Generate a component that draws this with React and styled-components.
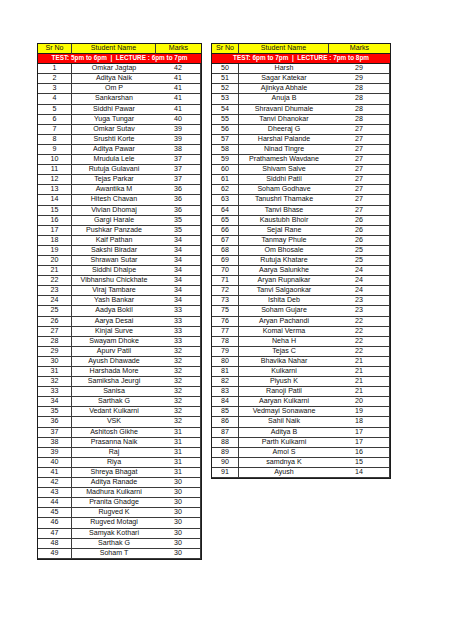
import React from 'react'
import styled, { createGlobalStyle } from 'styled-components'

const GlobalStyle = createGlobalStyle`
  html, body {
    margin: 0;
    padding: 0;
    background: #ffffff;
  }
  body {
    font-family: "Liberation Sans", Arial, sans-serif;
    color: #111111;
  }
`

const leftRows = [
  [1, 'Omkar Jagtap', 42], [2, 'Aditya Naik', 41], [3, 'Om P', 41], [4, 'Sankarshan', 41],
  [5, 'Siddhi Pawar', 41], [6, 'Yuga Tungar', 40], [7, 'Omkar Sutav', 39], [8, 'Srushti Korte', 39],
  [9, 'Aditya Pawar', 38], [10, 'Mrudula Lele', 37], [11, 'Rutuja Gulavani', 37], [12, 'Tejas Parkar', 37],
  [13, 'Awantika M', 36], [14, 'Hitesh Chavan', 36], [15, 'Vivian Dhomaj', 36], [16, 'Gargi Harale', 35],
  [17, 'Pushkar Panzade', 35], [18, 'Kaif Pathan', 34], [19, 'Sakshi Biradar', 34], [20, 'Shrawan Sutar', 34],
  [21, 'Siddhi Dhalpe', 34], [22, 'Vibhanshu Chickhate', 34], [23, 'Viraj Tambare', 34], [24, 'Yash Bankar', 34],
  [25, 'Aadya Bokil', 33], [26, 'Aarya Desai', 33], [27, 'Kinjal Surve', 33], [28, 'Swayam Dhoke', 33],
  [29, 'Apurv Patil', 32], [30, 'Ayush Dhawade', 32], [31, 'Harshada More', 32], [32, 'Samiksha Jeurgi', 32],
  [33, 'Sanisa', 32], [34, 'Sarthak G', 32], [35, 'Vedant Kulkarni', 32], [36, 'VSK', 32],
  [37, 'Ashitosh Gikhe', 31], [38, 'Prasanna Naik', 31], [39, 'Raj', 31], [40, 'Riya', 31],
  [41, 'Shreya Bhagat', 31], [42, 'Aditya Ranade', 30], [43, 'Madhura Kulkarni', 30], [44, 'Pranita Ghadge', 30],
  [45, 'Rugved K', 30], [46, 'Rugved Motagi', 30], [47, 'Samyak Kothari', 30], [48, 'Sarthak G', 30],
  [49, 'Soham T', 30],
]

const rightRows = [
  [50, 'Harsh', 29], [51, 'Sagar Katekar', 29], [52, 'Ajinkya Abhale', 28], [53, 'Anuja B', 28],
  [54, 'Shravani Dhumale', 28], [55, 'Tanvi Dhanokar', 28], [56, 'Dheeraj G', 27], [57, 'Harshal Palande', 27],
  [58, 'Ninad Tingre', 27], [59, 'Prathamesh Wavdane', 27], [60, 'Shivam Salve', 27], [61, 'Siddhi Patil', 27],
  [62, 'Soham Godhave', 27], [63, 'Tanushri Thamake', 27], [64, 'Tanvi Bhase', 27], [65, 'Kaustubh Bhoir', 26],
  [66, 'Sejal Rane', 26], [67, 'Tanmay Phule', 26], [68, 'Om Bhosale', 25], [69, 'Rutuja Khatare', 25],
  [70, 'Aarya Salunkhe', 24], [71, 'Aryan Rupnaikar', 24], [72, 'Tanvi Salgaonkar', 24], [73, 'Ishita Deb', 23],
  [75, 'Soham Gujare', 23], [76, 'Aryan Pachandi', 22], [77, 'Komal Verma', 22], [78, 'Neha H', 22],
  [79, 'Tejas C', 22], [80, 'Bhavika Nahar', 21], [81, 'Kulkarni', 21], [82, 'Piyush K', 21],
  [83, 'Ranoji Patil', 21], [84, 'Aaryan Kulkarni', 20], [85, 'Vedmayi Sonawane', 19], [86, 'Sahil Naik', 18],
  [87, 'Aditya B', 17], [88, 'Parth Kulkarni', 17], [89, 'Amol S', 16], [90, 'samdnya K', 15],
  [91, 'Ayush', 14],
]

const Page = styled.div`
  display: flex;
  align-items: flex-start;
  gap: 9px;
  padding: 43px 0 0 37px;
`

const Sheet = styled.div`
  display: grid;
  grid-template-columns: ${p => p.$cols};
  grid-auto-rows: 10.1px;
  border: 1.5px solid #1c1c1c;
  background: #ffffff;
`

const Cell = styled.div`
  box-sizing: border-box;
  display: flex;
  align-items: center;
  justify-content: center;
  font-size: 7.1px;
  line-height: 1;
  white-space: nowrap;
  overflow: hidden;
  border-right: 1px solid #3a3a3a;
  border-bottom: 1px solid #3a3a3a;
  &:nth-child(3n) {
    border-right: none;
  }
`

const HeadCell = styled(Cell)`
  background: #ffff00;
  color: #111111;
  border-bottom: 1px solid #1c1c1c;
`

const Banner = styled.div`
  grid-column: 1 / -1;
  box-sizing: border-box;
  display: flex;
  align-items: center;
  justify-content: center;
  background: #ff0000;
  color: #ffffff;
  font-weight: bold;
  font-size: 6.4px;
  line-height: 1;
  white-space: pre;
  border-bottom: 1px solid #1c1c1c;
`

const MarksTable = ({ cols, banner, rows }) => (
  <Sheet $cols={cols}>
    <HeadCell>Sr No</HeadCell>
    <HeadCell>Student Name</HeadCell>
    <HeadCell>Marks</HeadCell>
    <Banner>{banner}</Banner>
    {rows.map(([no, name, marks]) => (
      <React.Fragment key={no}>
        <Cell>{no}</Cell>
        <Cell>{name}</Cell>
        <Cell>{marks}</Cell>
      </React.Fragment>
    ))}
  </Sheet>
)

export default function App() {
  return (
    <>
      <GlobalStyle />
      <Page>
        <MarksTable
          cols="34px 84px 45px"
          banner={'TEST: 5pm to 6pm  |  LECTURE : 6pm to 7pm'}
          rows={leftRows}
        />
        <MarksTable
          cols="27px 90px 61px"
          banner={'TEST: 6pm to 7pm  |  LECTURE : 7pm to 8pm'}
          rows={rightRows}
        />
      </Page>
    </>
  )
}
